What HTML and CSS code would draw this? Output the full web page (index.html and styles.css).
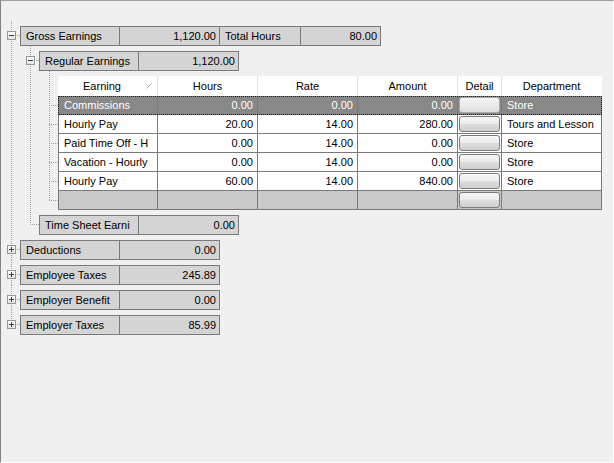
FILE: index.html
```html
<!DOCTYPE html>
<html>
<head>
<meta charset="utf-8">
<link rel="stylesheet" href="styles.css">
</head>
<body>
<div class="frame">
  <div class="tree">
    <div class="node">
      <div class="row">
        <span class="exp"></span>
        <div class="box">
          <div class="cell lbl">Gross Earnings</div>
          <div class="cell val">1,120.00</div>
          <div class="cell lbl2">Total Hours</div>
          <div class="cell val2">80.00</div>
        </div>
      </div>
      <div class="children">
        <div class="node">
          <div class="row">
            <span class="exp"></span>
            <div class="box">
              <div class="cell lbl">Regular Earnings</div>
              <div class="cell val">1,120.00</div>
            </div>
          </div>
          <div class="children">
            <div class="gnode">
              <div class="ghead">
                <div class="hc w1 sort"><span class="ht">Earning</span><svg class="sortg" width="6" height="6" viewBox="0 0 6 6"><line x1="0.5" y1="5.5" x2="5.5" y2="0.5" stroke="#a8a8a8" stroke-width="1"/></svg></div>
                <div class="hc w">Hours</div>
                <div class="hc w">Rate</div>
                <div class="hc w">Amount</div>
                <div class="hc wd">Detail</div>
                <div class="hc w last">Department</div>
              </div>
              <div class="grow">
                <div class="cells sel">
                  <div class="c w1">Commissions</div>
                  <div class="c w num">0.00</div>
                  <div class="c w num">0.00</div>
                  <div class="c w num">0.00</div>
                  <div class="c wd det"><div class="btn"></div></div>
                  <div class="c w">Store</div>
                </div>
              </div>
              <div class="grow">
                <div class="cells">
                  <div class="c w1">Hourly Pay</div>
                  <div class="c w num">20.00</div>
                  <div class="c w num">14.00</div>
                  <div class="c w num">280.00</div>
                  <div class="c wd det"><div class="btn"></div></div>
                  <div class="c w">Tours and Lesson</div>
                </div>
              </div>
              <div class="grow">
                <div class="cells">
                  <div class="c w1">Paid Time Off - H</div>
                  <div class="c w num">0.00</div>
                  <div class="c w num">14.00</div>
                  <div class="c w num">0.00</div>
                  <div class="c wd det"><div class="btn"></div></div>
                  <div class="c w">Store</div>
                </div>
              </div>
              <div class="grow">
                <div class="cells">
                  <div class="c w1">Vacation - Hourly</div>
                  <div class="c w num">0.00</div>
                  <div class="c w num">14.00</div>
                  <div class="c w num">0.00</div>
                  <div class="c wd det"><div class="btn"></div></div>
                  <div class="c w">Store</div>
                </div>
              </div>
              <div class="grow">
                <div class="cells">
                  <div class="c w1">Hourly Pay</div>
                  <div class="c w num">60.00</div>
                  <div class="c w num">14.00</div>
                  <div class="c w num">840.00</div>
                  <div class="c wd det"><div class="btn"></div></div>
                  <div class="c w">Store</div>
                </div>
              </div>
              <div class="grow">
                <div class="cells new">
                  <div class="c w1"></div>
                  <div class="c w num"></div>
                  <div class="c w num"></div>
                  <div class="c w num"></div>
                  <div class="c wd det"><div class="btn"></div></div>
                  <div class="c w"></div>
                </div>
              </div>
            </div>
          </div>
        </div>
        <div class="node last">
          <div class="row">
            <div class="box">
              <div class="cell lbl">Time Sheet Earni</div>
              <div class="cell val">0.00</div>
            </div>
          </div>
        </div>
      </div>
    </div>
    <div class="node">
      <div class="row">
        <span class="exp plus"></span>
        <div class="box">
          <div class="cell lbl">Deductions</div>
          <div class="cell val">0.00</div>
        </div>
      </div>
    </div>
    <div class="node">
      <div class="row">
        <span class="exp plus"></span>
        <div class="box">
          <div class="cell lbl">Employee Taxes</div>
          <div class="cell val">245.89</div>
        </div>
      </div>
    </div>
    <div class="node">
      <div class="row">
        <span class="exp plus"></span>
        <div class="box">
          <div class="cell lbl">Employer Benefit</div>
          <div class="cell val">0.00</div>
        </div>
      </div>
    </div>
    <div class="node last">
      <div class="row">
        <span class="exp plus"></span>
        <div class="box">
          <div class="cell lbl">Employer Taxes</div>
          <div class="cell val">85.99</div>
        </div>
      </div>
    </div>
  </div>
</div>
</body>
</html>
```

FILE: styles.css
```css
* { box-sizing: border-box; }
html, body { margin: 0; padding: 0; }
body {
  background: #f0f0f0;
  font-family: "Liberation Sans", Arial, sans-serif;
  font-size: 11px;
  color: #000;
}
.frame {
  width: 614px;
  height: 463px;
  border-left: 1px solid #828282;
  border-top: 1px solid #a0a0a0;
  border-right: 1px solid #ffffff;
  border-bottom: 1px solid #ffffff;
  background: #f0f0f0;
  overflow: hidden;
}
.tree { padding-top: 20px; }

/* tree nodes with dotted connector lines */
.node {
  padding-top: 5px;
  background-image: repeating-linear-gradient(to bottom, #a0a0a0 0 1px, transparent 1px 2px);
  background-repeat: no-repeat;
  background-position: 10px 0;
  background-size: 1px 100%;
}
.node.last { background-size: 1px 15px; }
.row {
  display: flex;
  height: 20px;
  padding-left: 19px;
  background-image: repeating-linear-gradient(to right, #a0a0a0 0 1px, transparent 1px 2px);
  background-repeat: no-repeat;
  background-position: 10px 9px;
  background-size: 9px 1px;
}
.children { margin-left: 19px; }

.exp {
  flex: none;
  width: 9px;
  height: 9px;
  margin: 5px 4px 0 -13px;
  border: 1px solid #969696;
  background:
    linear-gradient(#3c3c3c, #3c3c3c) 1px 3px / 5px 1px no-repeat,
    linear-gradient(#ffffff, #e2e2e2);
}
.exp.plus {
  background:
    linear-gradient(#3c3c3c, #3c3c3c) 1px 3px / 5px 1px no-repeat,
    linear-gradient(#3c3c3c, #3c3c3c) 3px 1px / 1px 5px no-repeat,
    linear-gradient(#ffffff, #e2e2e2);
}

/* label/value boxes */
.box {
  flex: none;
  display: flex;
  height: 20px;
  border: 1px solid #7a7a7a;
  background: #d4d4d4;
}
.cell {
  line-height: 18px;
  white-space: nowrap;
  overflow: hidden;
}
.lbl { width: 98px; padding-left: 5px; }
.val { width: 100px; border-left: 1px solid #7a7a7a; text-align: right; padding-right: 3px; }
.lbl2 { width: 81px; border-left: 1px solid #7a7a7a; padding-left: 5px; }
.val2 { width: 80px; border-left: 1px solid #7a7a7a; text-align: right; padding-right: 3px; }

/* grid */
.gnode {
  padding-top: 5px;
  background-image: repeating-linear-gradient(to bottom, #a0a0a0 0 1px, transparent 1px 2px);
  background-repeat: no-repeat;
  background-position: 10px 0;
  background-size: 1px 130px;
}
.ghead {
  display: flex;
  margin-left: 19px;
  width: 544px;
  height: 20px;
  background: #ffffff;
}
.hc {
  height: 20px;
  line-height: 20px;
  text-align: center;
  border-right: 1px solid #e2e2e2;
  white-space: nowrap;
  overflow: hidden;
}
.hc.last { border-right-color: #ffffff; }
.hc.sort { display: flex; align-items: center; }
.hc.sort .ht { flex: 1; text-align: center; }
.sortg { flex: none; margin-right: 5px; }
.ghead .w1 { width: 100px; }

.grow {
  display: flex;
  padding-left: 19px;
  background-image: repeating-linear-gradient(to right, #a0a0a0 0 1px, transparent 1px 2px);
  background-repeat: no-repeat;
  background-position: 10px 9px;
  background-size: 9px 1px;
}
.cells {
  display: flex;
  border-left: 1px solid #7a7a7a;
  background: #ffffff;
}
.c {
  height: 19px;
  line-height: 18px;
  padding: 0 4px 0 5px;
  border-right: 1px solid #7a7a7a;
  border-bottom: 1px solid #7a7a7a;
  white-space: nowrap;
  overflow: hidden;
  background: #ffffff;
}
.w1 { width: 99px; }
.w { width: 100px; }
.wd { width: 44px; }
.c.num { text-align: right; }
.c.det { padding: 0; }
.btn {
  width: 41px;
  height: 16px;
  margin: 1px 0 0 1px;
  border: 1px solid #7c7c7c;
  border-radius: 3px;
  background: linear-gradient(#f7f7f7 0%, #ececec 48%, #dddddd 52%, #d0d0d0 100%);
}
.cells.sel { outline: 1px dotted #1a1a1a; outline-offset: -1px; }
.cells.sel .c { background: #888888; color: #ffffff; }
.cells.sel .btn {
  border-color: #a8a8a8;
  background: linear-gradient(#f4f4f4 0%, #eaeaea 50%, #dedede 100%);
}
.cells.new .c { background: #c9c9c9; }
```
